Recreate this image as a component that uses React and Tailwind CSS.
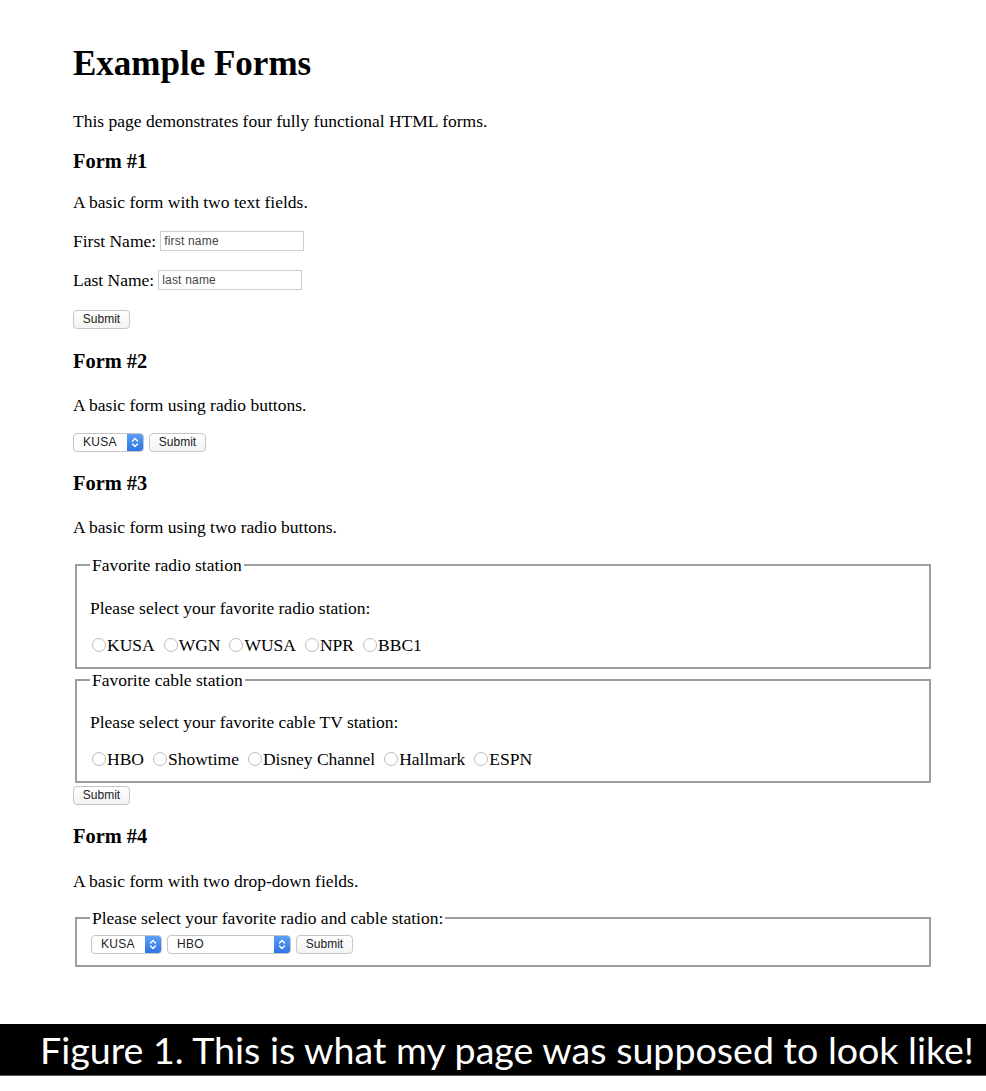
import React from "react";

const serif = { fontFamily: '"Liberation Serif", "Times New Roman", serif' };

const SubmitButton = ({ className = "" }) => (
  <button
    type="button"
    className={`h-[19px] w-[57px] rounded-[4px] border border-[#c6c6c6] bg-gradient-to-b from-white to-[#f3f3f3] text-[12px] leading-[17px] text-[#222] font-['Liberation_Sans',Arial,sans-serif] ${className}`}
  >
    Submit
  </button>
);

const FakeSelect = ({ value, width }) => (
  <div
    className={`flex h-[19px] items-stretch rounded-[4px] border border-[#c6c6c6] bg-white font-['Liberation_Sans',Arial,sans-serif] ${width}`}
  >
    <span className="flex-1 pl-[9px] text-[12px] leading-[17px] tracking-[0.3px] text-[#222]">{value}</span>
    <span className="flex w-[16px] items-center justify-center rounded-r-[3px] bg-gradient-to-b from-[#5aa0f7] to-[#2f74e4]">
      <svg width="8" height="11" viewBox="0 0 8 11" fill="none" stroke="white" strokeWidth="1.4" strokeLinecap="round" strokeLinejoin="round">
        <path d="M1.5 4 L4 1.5 L6.5 4" />
        <path d="M1.5 7 L4 9.5 L6.5 7" />
      </svg>
    </span>
  </div>
);

const Radio = ({ label, first }) => (
  <label className={`flex items-center ${first ? "ml-[2px]" : "ml-[9px]"}`}>
    <input
      type="radio"
      name={label}
      className="mr-[1px] h-[14px] w-[14px] appearance-none rounded-full border border-[#bdbdbd] bg-white"
    />
    <span>{label}</span>
  </label>
);

const TextField = ({ label, placeholder, mt }) => (
  <div className={`flex h-[20px] items-center gap-[4px] ${mt}`}>
    <span>{label}</span>
    <input
      type="text"
      defaultValue={placeholder}
      className="h-[20px] w-[144px] border border-[#cfcfcf] px-[3px] text-[12px] tracking-[0.2px] text-[#444] outline-none font-['Liberation_Sans',Arial,sans-serif]"
    />
  </div>
);

const Heading = ({ children, mt }) => (
  <h3 className={`text-[20.4px] font-bold leading-[23px] ${mt}`}>{children}</h3>
);

const Para = ({ children, mt }) => <p className={`leading-[20px] ${mt}`}>{children}</p>;

export default function App() {
  const radio = ["KUSA", "WGN", "WUSA", "NPR", "BBC1"];
  const cable = ["HBO", "Showtime", "Disney Channel", "Hallmark", "ESPN"];

  return (
    <div className="h-[1091px] w-[986px] overflow-hidden bg-white text-black" style={serif}>
      <div className="pl-[73px] text-[17.5px]">
        <h1 className="mt-[44px] text-[35px] font-bold leading-[40px]">Example Forms</h1>
        <Para mt="mt-[27px]">This page demonstrates four fully functional HTML forms.</Para>

        <Heading mt="mt-[19px]">Form #1</Heading>
        <Para mt="mt-[19px]">A basic form with two text fields.</Para>
        <TextField label="First Name:" placeholder="first name" mt="mt-[19px]" />
        <TextField label="Last Name:" placeholder="last name" mt="mt-[19px]" />
        <SubmitButton className="mt-[20px] block" />

        <Heading mt="mt-[21px]">Form #2</Heading>
        <Para mt="mt-[22px]">A basic form using radio buttons.</Para>
        <div className="mt-[18px] flex gap-[5px]">
          <FakeSelect value="KUSA" width="w-[71px]" />
          <SubmitButton />
        </div>

        <Heading mt="mt-[20px]">Form #3</Heading>
        <Para mt="mt-[22px]">A basic form using two radio buttons.</Para>

        <fieldset className="mt-[18px] ml-[2px] w-[856px] border-2 border-[#9e9e9e] px-[13px] pb-[12px]">
          <legend className="px-[2px] leading-[20px]">Favorite radio station</legend>
          <p className="mt-[23px] leading-[20px]">Please select your favorite radio station:</p>
          <div className="mt-[17px] flex h-[20px] items-center">
            {radio.map((r, i) => (
              <Radio key={r} label={r} first={i === 0} />
            ))}
          </div>
        </fieldset>

        <fieldset className="mt-[1px] ml-[2px] w-[856px] border-2 border-[#9e9e9e] px-[13px] pb-[12px]">
          <legend className="px-[2px] leading-[20px]">Favorite cable station</legend>
          <p className="mt-[22px] leading-[20px]">Please select your favorite cable TV station:</p>
          <div className="mt-[17px] flex h-[20px] items-center">
            {cable.map((c, i) => (
              <Radio key={c} label={c} first={i === 0} />
            ))}
          </div>
        </fieldset>
        <SubmitButton className="mt-[3px] block" />

        <Heading mt="mt-[20px]">Form #4</Heading>
        <Para mt="mt-[23px]">A basic form with two drop-down fields.</Para>

        <fieldset className="mt-[17px] ml-[2px] w-[856px] border-2 border-[#9e9e9e] px-[13px] pb-[11px]">
          <legend className="px-[2px] leading-[20px]">Please select your favorite radio and cable station:</legend>
          <div className="mt-[7px] ml-[1px] flex gap-[5px]">
            <FakeSelect value="KUSA" width="w-[71px]" />
            <FakeSelect value="HBO" width="w-[124px]" />
            <SubmitButton />
          </div>
        </fieldset>
      </div>

      <div className="mt-[57px] flex h-[52px] items-center border-b border-[#555] bg-black pl-[40px] text-[37.6px] leading-none text-white font-['Lato',sans-serif]">
        Figure 1. This is what my page was supposed to look like!
      </div>
    </div>
  );
}
